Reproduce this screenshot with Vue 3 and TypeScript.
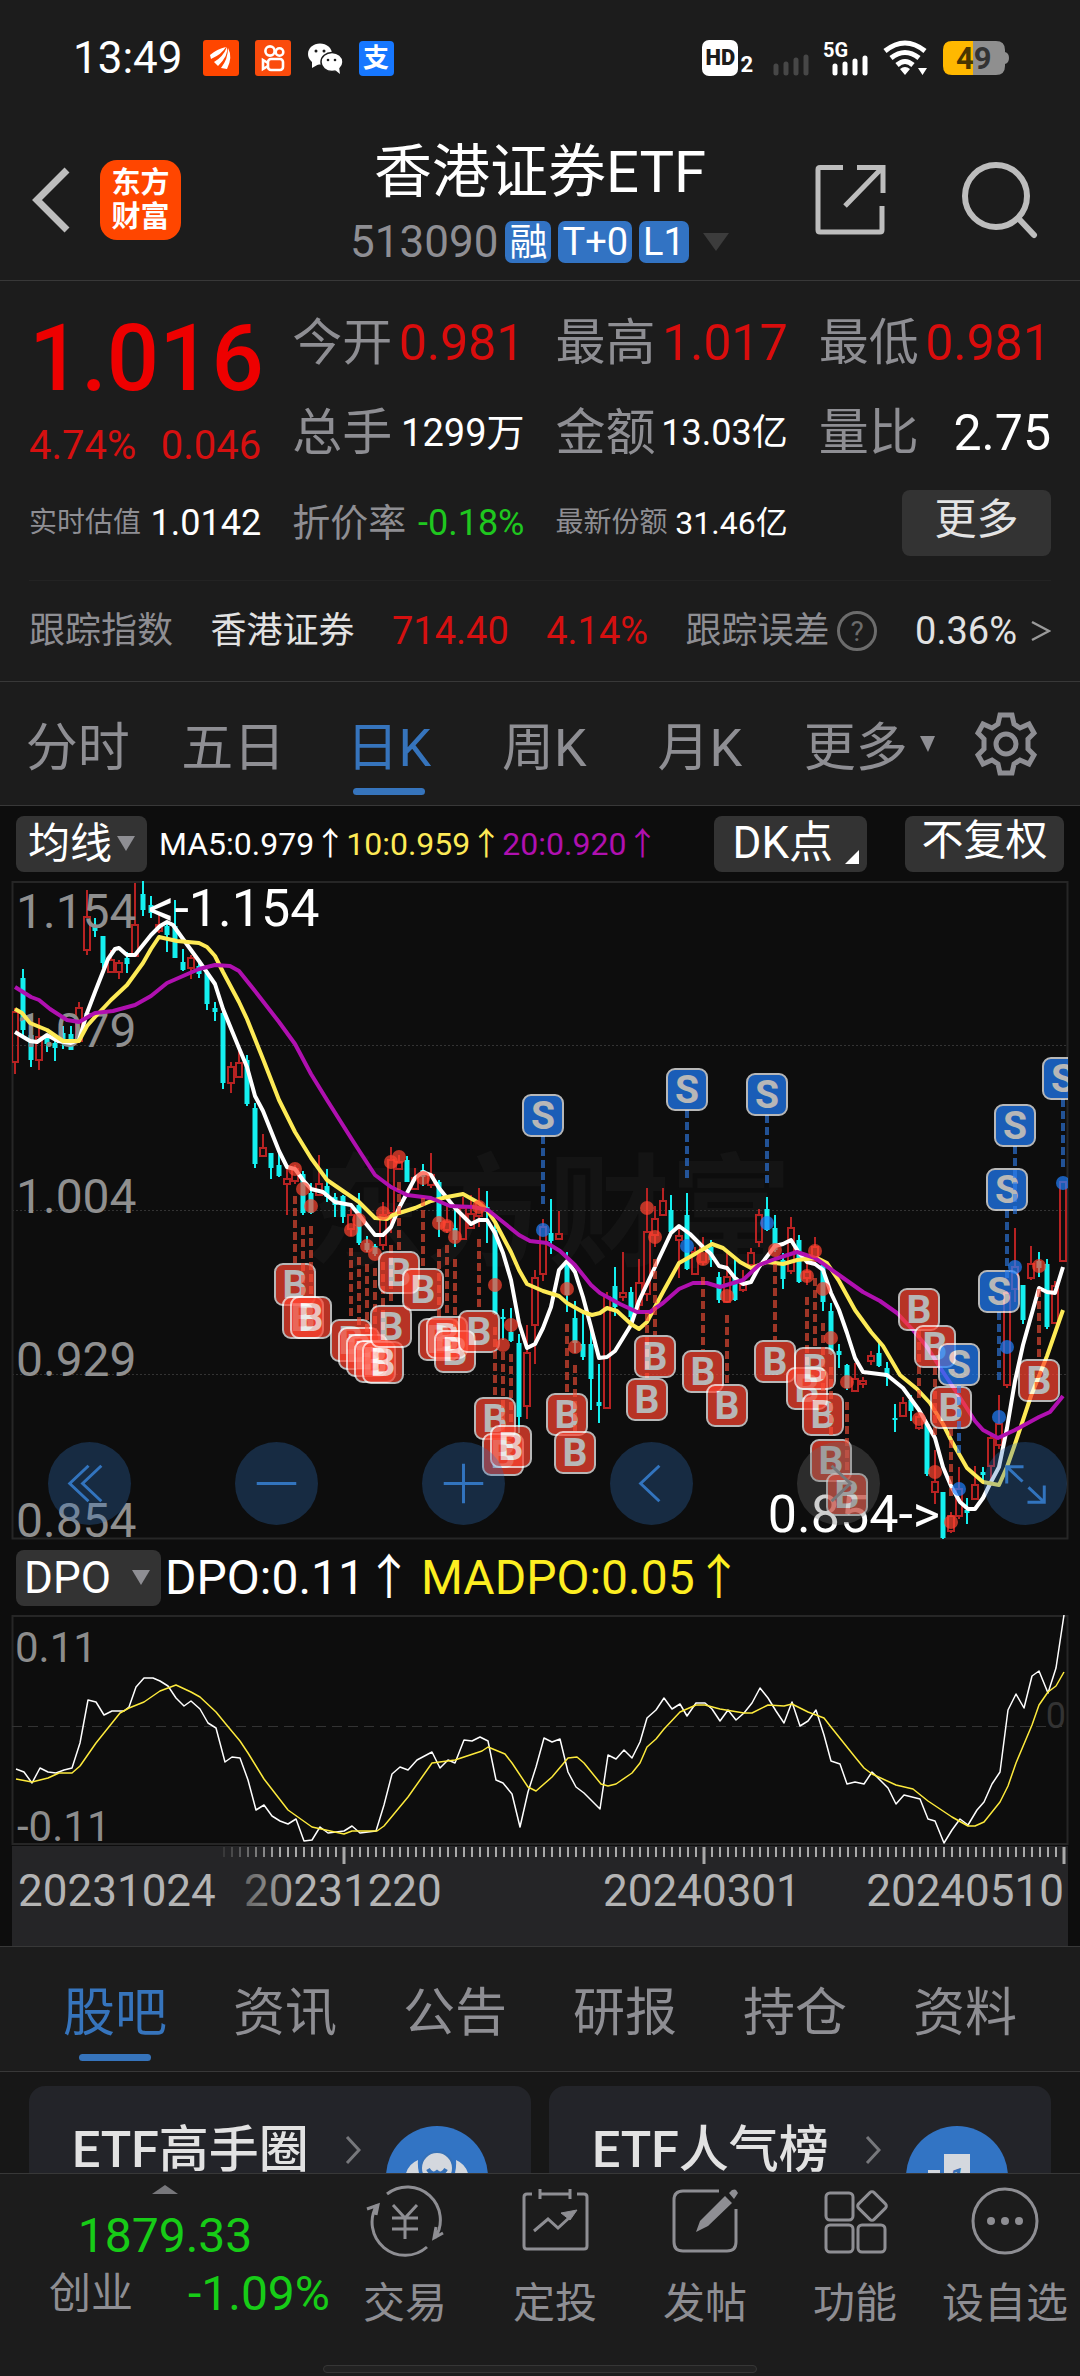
<script setup lang="ts">
import { ref } from 'vue'

// [high, body top, body bottom, low, rising]
type Candle = [number, number, number, number, 0 | 1]
// [candle index, dot y, badge y]
type Signal = [number, number, number]

const candles: Candle[] = [
  [1008, 1012, 1062, 1074, 1], [969, 978, 1030, 1035, 0], [1022, 1035, 1060, 1067, 0], [1018, 1037, 1060, 1070, 1],
  [1035, 1038, 1044, 1052, 0], [1041, 1043, 1048, 1061, 0], [1026, 1033, 1041, 1049, 0], [1026, 1034, 1050, 1050, 0],
  [1002, 1008, 1041, 1043, 1], [890, 917, 950, 955, 1], [918, 927, 931, 937, 0], [936, 936, 963, 968, 0],
  [950, 960, 972, 973, 1], [960, 963, 972, 979, 1], [952, 958, 964, 973, 0], [883, 925, 956, 956, 1],
  [881, 894, 910, 916, 0], [896, 905, 913, 918, 0], [913, 925, 931, 933, 1], [924, 926, 935, 952, 0],
  [900, 926, 958, 958, 0], [949, 962, 970, 971, 0], [955, 958, 968, 979, 1], [961, 966, 974, 978, 0],
  [970, 973, 1004, 1010, 0], [1002, 1008, 1012, 1021, 0], [1011, 1013, 1083, 1089, 0], [1062, 1067, 1083, 1093, 1],
  [1050, 1063, 1077, 1078, 1], [1055, 1060, 1104, 1106, 0], [1103, 1108, 1164, 1168, 0], [1134, 1148, 1156, 1157, 1],
  [1153, 1153, 1168, 1179, 0], [1148, 1165, 1176, 1177, 0], [1169, 1179, 1184, 1215, 1], [1165, 1169, 1181, 1184, 1],
  [1171, 1174, 1213, 1215, 0], [1183, 1193, 1213, 1214, 0], [1155, 1184, 1195, 1196, 1], [1169, 1186, 1197, 1202, 0],
  [1193, 1197, 1205, 1217, 0], [1195, 1196, 1217, 1223, 0], [1208, 1215, 1229, 1236, 1], [1193, 1205, 1243, 1245, 0],
  [1236, 1243, 1250, 1252, 0], [1244, 1246, 1254, 1256, 0], [1202, 1215, 1245, 1250, 1], [1147, 1160, 1213, 1233, 1],
  [1155, 1162, 1169, 1170, 1], [1156, 1160, 1182, 1182, 0], [1168, 1178, 1189, 1190, 1], [1164, 1170, 1177, 1186, 0],
  [1153, 1175, 1185, 1188, 1], [1180, 1182, 1222, 1237, 0], [1205, 1222, 1230, 1233, 1], [1208, 1228, 1240, 1247, 0],
  [1197, 1208, 1239, 1240, 1], [1195, 1214, 1228, 1229, 1], [1188, 1203, 1216, 1227, 1], [1191, 1207, 1212, 1243, 0],
  [1222, 1230, 1314, 1315, 0], [1309, 1317, 1319, 1340, 0], [1308, 1332, 1341, 1342, 0], [1334, 1343, 1417, 1433, 0],
  [1325, 1353, 1406, 1419, 1], [1270, 1278, 1325, 1364, 1], [1219, 1227, 1274, 1281, 1], [1199, 1233, 1241, 1254, 0],
  [1211, 1234, 1239, 1240, 1], [1252, 1262, 1295, 1312, 0], [1301, 1318, 1343, 1353, 0], [1312, 1344, 1357, 1360, 0],
  [1325, 1344, 1379, 1410, 0], [1364, 1402, 1406, 1423, 0], [1292, 1297, 1408, 1409, 1], [1267, 1286, 1307, 1316, 0],
  [1252, 1293, 1297, 1301, 1], [1287, 1292, 1317, 1327, 0], [1259, 1283, 1305, 1313, 1], [1188, 1232, 1294, 1301, 1],
  [1206, 1219, 1235, 1247, 1], [1188, 1201, 1215, 1216, 1], [1195, 1210, 1232, 1233, 0], [1227, 1236, 1240, 1278, 1],
  [1193, 1215, 1269, 1270, 0], [1247, 1252, 1274, 1275, 1], [1237, 1247, 1262, 1265, 1], [1240, 1247, 1260, 1267, 0],
  [1272, 1277, 1300, 1303, 0], [1252, 1277, 1302, 1303, 1], [1258, 1277, 1300, 1301, 0], [1270, 1285, 1290, 1292, 1],
  [1248, 1253, 1265, 1269, 1], [1209, 1215, 1242, 1247, 1], [1197, 1209, 1230, 1231, 0], [1215, 1228, 1250, 1252, 0],
  [1253, 1260, 1279, 1289, 0], [1217, 1228, 1271, 1274, 1], [1235, 1240, 1282, 1283, 0], [1260, 1272, 1278, 1285, 1],
  [1237, 1247, 1261, 1266, 1], [1261, 1265, 1302, 1311, 0], [1303, 1311, 1354, 1355, 0], [1344, 1351, 1355, 1368, 0],
  [1364, 1365, 1388, 1390, 0], [1363, 1379, 1391, 1392, 1], [1377, 1381, 1384, 1388, 1], [1351, 1356, 1361, 1365, 1],
  [1342, 1353, 1366, 1367, 0], [1362, 1368, 1377, 1386, 0], [1404, 1418, 1420, 1432, 0], [1397, 1403, 1416, 1417, 1],
  [1395, 1400, 1411, 1421, 0], [1414, 1417, 1428, 1430, 1], [1421, 1424, 1474, 1476, 0], [1450, 1482, 1492, 1504, 1],
  [1492, 1492, 1538, 1539, 0], [1512, 1516, 1531, 1533, 1], [1467, 1489, 1516, 1519, 1], [1498, 1510, 1513, 1524, 0],
  [1466, 1485, 1499, 1500, 1], [1467, 1472, 1475, 1480, 0], [1435, 1438, 1466, 1486, 1], [1395, 1424, 1445, 1449, 1],
  [1291, 1293, 1385, 1388, 1], [1228, 1267, 1289, 1302, 1], [1285, 1285, 1320, 1324, 0], [1246, 1264, 1278, 1280, 1],
  [1252, 1261, 1268, 1277, 0], [1259, 1264, 1327, 1329, 0], [1281, 1286, 1323, 1324, 1], [1182, 1182, 1261, 1261, 1],
]

const buys: Signal[] = [
  [35, 1169, 1284], [36, 1189, 1317], [37, 1206, 1317], [42, 1230, 1340], [43, 1220, 1348], [44, 1246, 1355],
  [45, 1254, 1361], [46, 1213, 1362], [47, 1162, 1326], [48, 1157, 1272], [51, 1178, 1289], [53, 1223, 1339],
  [54, 1226, 1337], [55, 1237, 1351], [58, 1207, 1331], [60, 1285, 1418], [61, 1345, 1454], [62, 1325, 1446],
  [69, 1289, 1414], [70, 1347, 1452], [79, 1208, 1399], [80, 1237, 1356], [86, 1259, 1371], [89, 1296, 1405],
  [95, 1250, 1361], [99, 1276, 1388], [100, 1251, 1368], [101, 1289, 1414], [102, 1338, 1460], [104, 1382, 1494],
  [113, 1419, 1309], [115, 1472, 1346], [117, 1522, 1407], [128, 1266, 1380],
]
const sells: Signal[] = [
  [66, 1230, 1115], [84, 1246, 1089], [94, 1223, 1094], [118, 1489, 1364],
  [123, 1417, 1291], [124, 1347, 1189], [125, 1267, 1125], [131, 1183, 1078],
]

const cx = (i: number): number => 15 + i * 8

const signals = [
  ...buys.map((s) => ({ s, kind: 'B' })),
  ...sells.map((s) => ({ s, kind: 'S' })),
].map(({ s: [i, dot, y], kind }) => {
  const below = y > dot
  return {
    kind,
    x: cx(i),
    dot,
    y,
    from: below ? candles[i][3] + 12 : y + 21,
    to: below ? y - 21 : candles[i][0] - 13,
  }
})

const ma5 =
  '15,1032 30,1041 37,1042 47,1035 58,1041 71,1043 79,1040 87,1013 95,992 108,959 115,949 119,948 127,955 135,955 143,945 151,935 160,926 167,922 173,925 183,939 199,961 215,984 223,1009 239,1048 247,1067 255,1096 263,1111 279,1151 287,1167 295,1169 303,1180 311,1189 323,1192 335,1202 351,1205 360,1216 367,1225 375,1235 383,1235 391,1227 399,1208 415,1178 423,1172 431,1175 439,1188 455,1208 471,1224 479,1220 487,1220 495,1233 503,1253 511,1280 519,1323 527,1348 535,1344 543,1328 551,1307 559,1270 567,1261 575,1272 583,1297 591,1327 599,1358 607,1357 615,1351 623,1338 631,1325 639,1301 655,1267 671,1233 679,1226 690,1234 703,1247 711,1254 719,1266 727,1268 735,1278 743,1284 751,1282 759,1267 775,1246 783,1244 791,1240 799,1253 807,1262 815,1264 823,1270 831,1293 839,1310 847,1333 855,1358 863,1372 887,1375 903,1388 919,1410 935,1438 943,1467 951,1486 960,1502 968,1509 975,1509 983,1498 991,1482 999,1467 1007,1428 1015,1381 1023,1345 1039,1288 1047,1292 1055,1293 1063,1267'
const ma10 =
  '15,1009 22,1013 30,1023 47,1030 63,1041 79,1041 87,1026 95,1017 111,1000 127,985 143,963 151,949 159,937 177,941 199,943 207,947 215,956 223,972 239,1002 247,1019 263,1059 279,1100 295,1132 311,1158 327,1180 343,1191 359,1202 375,1218 387,1219 393,1215 415,1208 431,1201 447,1197 463,1194 479,1203 487,1210 495,1222 511,1252 519,1270 527,1284 543,1291 559,1296 567,1303 583,1312 592,1315 600,1313 607,1308 617,1311 631,1324 639,1329 647,1322 663,1292 679,1263 695,1254 712,1244 723,1248 740,1262 751,1268 767,1262 783,1264 797,1260 817,1258 827,1263 839,1281 855,1310 871,1332 883,1346 900,1375 917,1389 930,1403 943,1424 951,1440 967,1468 983,1482 999,1485 1007,1467 1015,1444 1031,1396 1047,1356 1063,1310'
const ma20 =
  '15,987 31,997 39,1000 50,1009 67,1020 79,1022 95,1013 113,1011 135,1005 151,996 167,983 183,976 199,969 215,965 230,966 239,971 255,991 279,1022 295,1044 311,1074 327,1100 351,1138 360,1152 375,1175 391,1187 407,1195 431,1198 450,1206 473,1207 488,1210 503,1222 519,1235 530,1241 547,1243 560,1251 575,1265 591,1285 600,1293 620,1304 637,1312 650,1312 663,1303 679,1289 693,1283 707,1283 720,1287 743,1280 759,1265 775,1259 797,1252 815,1258 839,1275 863,1292 880,1301 897,1313 913,1330 927,1347 943,1372 959,1396 975,1421 983,1430 998,1438 1015,1430 1039,1417 1050,1412 1063,1396'
const dpo =
  '16,1769 24,1772 32,1783 40,1768 48,1772 56,1773 64,1770 72,1768 80,1743 88,1700 96,1702 104,1715 112,1711 124,1711 129,1707 136,1687 144,1678 153,1678 160,1681 168,1686 176,1698 184,1706 191,1701 200,1709 208,1723 216,1728 225,1762 232,1757 240,1758 248,1780 256,1810 264,1805 272,1816 280,1821 288,1824 296,1819 304,1841 312,1840 320,1827 328,1833 344,1831 352,1826 360,1833 376,1831 384,1805 392,1774 400,1767 408,1770 417,1760 432,1752 440,1768 448,1760 455,1763 464,1740 472,1741 480,1737 488,1741 496,1780 503,1783 512,1794 520,1827 528,1792 536,1767 544,1738 552,1742 560,1739 568,1772 576,1787 584,1793 600,1809 608,1755 616,1759 624,1750 632,1758 640,1742 647,1718 656,1710 664,1698 672,1709 680,1704 687,1716 696,1703 705,1703 712,1709 720,1721 728,1710 736,1720 744,1713 752,1703 760,1688 768,1698 776,1711 784,1723 792,1702 800,1726 808,1721 816,1710 824,1735 831,1761 840,1764 847,1784 855,1782 864,1784 872,1772 888,1788 896,1804 904,1795 920,1799 928,1819 935,1821 944,1843 952,1830 960,1819 968,1825 977,1810 984,1802 992,1784 1000,1772 1008,1710 1016,1694 1024,1708 1032,1676 1039,1671 1048,1693 1056,1668 1064,1615'
const madpo =
  '16,1779 32,1782 48,1778 59,1773 72,1773 80,1766 96,1743 120,1713 129,1708 144,1702 160,1691 176,1685 191,1692 200,1697 216,1712 225,1723 240,1741 248,1753 264,1779 288,1810 312,1827 344,1834 352,1831 377,1831 384,1826 408,1797 432,1763 455,1760 482,1751 488,1747 505,1754 512,1763 528,1787 536,1791 552,1777 568,1758 577,1757 584,1763 601,1784 608,1786 616,1784 632,1773 640,1763 647,1747 656,1739 664,1729 680,1712 696,1705 705,1705 720,1709 744,1713 752,1713 768,1705 784,1706 792,1704 808,1712 816,1715 824,1718 831,1727 855,1757 864,1768 872,1774 896,1785 913,1789 928,1801 952,1817 968,1826 975,1826 984,1822 1000,1802 1008,1786 1016,1763 1032,1725 1039,1705 1048,1692 1056,1686 1064,1672'

const ticks = Array.from({ length: 106 }, (_, k) => {
  const x = 224 + k * 8
  return { x, major: (x - 344) % 360 === 0, opacity: Math.min(1, 0.15 + k * 0.12) }
})

const periods = ['分时', '五日', '日K', '周K', '月K']
const period = ref('日K')
const sections = ['股吧', '资讯', '公告', '研报', '持仓', '资料']
const section = ref('股吧')
</script>

<template>
  <div class="app">
    <div class="status">
      <div class="status-side">
        <span class="time">13:49</span>
        <svg class="s-icon" viewBox="0 0 36 36"><rect width="36" height="36" rx="3" fill="#ff4600" /><path d="M7 15q7-6 16-8q-4 7-15 12zM11 22q9-5 13-15q2 8-9 19zM18 28q7-9 7-20q5 9-1 21z" fill="#fff" /></svg>
        <svg class="s-icon" viewBox="0 0 36 36"><rect width="36" height="36" rx="3" fill="#fa4b0c" /><g fill="none" stroke="#fff" stroke-width="2.6"><circle cx="15" cy="11" r="4.6" /><circle cx="24.500" cy="12" r="3.800" /><rect x="13" y="19" width="15" height="11" rx="3" /><path d="M13 23L8 20v9l5-3" /></g></svg>
        <svg class="s-icon" viewBox="0 0 36 36"><ellipse cx="13" cy="14" rx="12" ry="10.500" fill="#fff" /><path d="M5 20l0 8 7-4z" fill="#fff" /><ellipse cx="25" cy="22" rx="11" ry="9.500" fill="#fff" stroke="#1c1c1c" stroke-width="1.500" /><path d="M28 30l5 4-1-7z" fill="#fff" /><g fill="#1c1c1c"><circle cx="9" cy="11" r="1.500" /><circle cx="17" cy="11" r="1.500" /><circle cx="21" cy="20" r="1.300" /><circle cx="28" cy="20" r="1.300" /></g></svg>
        <span class="alipay">支</span>
      </div>
      <div class="status-side right">
        <span class="hd"><b>HD</b><i>2</i></span>
        <svg class="bars dim" viewBox="0 0 36 36"><path d="M3 26v7M13 24v9M23 20v13M33 17v16" stroke="#474747" stroke-width="5" stroke-linecap="round" /></svg>
        <svg class="net" viewBox="0 0 46 36"><text x="0" y="17" font-size="20" font-weight="700" fill="#fff">5G</text><path d="M12 26v7M22 24v9M32 21v12M42 18v15" stroke="#fff" stroke-width="5" stroke-linecap="round" /></svg>
        <svg class="wifi" viewBox="0 0 46 36"><g fill="none" stroke="#fff" stroke-width="5"><path d="M2 11Q22-5 42 11" /><path d="M8 18Q22 7 36 18" /><path d="M14 25Q22 18 30 25" /></g><path d="M17 29q5-4 10 0l-5 6zM35 28h9l-4.500 7z" fill="#fff" /></svg>
        <svg class="battery" viewBox="0 0 66 34"><path d="M30 0h23q9 0 9 9v2q4 1 4 6t-4 6v2q0 9-9 9H30z" fill="#8f8f8f" /><path d="M30 0H9Q0 0 0 9v16q0 9 9 9h21z" fill="#ffb800" /><text x="13" y="28" font-size="31" font-weight="700" fill="#4a3600">4<tspan fill="#333">9</tspan></text></svg>
      </div>
    </div>

    <header class="header">
      <div class="head-left">
        <button class="icon-btn" aria-label="返回"><svg width="38" height="66" viewBox="0 0 38 66"><path d="M35 3L5 33l30 30" fill="none" stroke="#bdbdbd" stroke-width="7" /></svg></button>
        <a class="brand" href="#">东方<br />财富</a>
      </div>
      <div class="head-title">
        <h1>香港证券ETF</h1>
        <div class="code">
          <span>513090</span><b>融</b><b>T+0</b><b>L1</b>
          <svg width="28" height="18" viewBox="0 0 28 18"><path d="M1 0h26L14 18z" fill="#3c3c3c" /></svg>
        </div>
      </div>
      <div class="head-right">
        <button class="icon-btn" aria-label="分享"><svg width="72" height="72" viewBox="0 0 72 72" fill="none" stroke="#bdbdbd" stroke-width="5"><path d="M29 3.500H6q-2 0-2 2V66q0 2 2 2h60q2 0 2-2V42" /><path d="M43 3.500h26V29M68 4L31 42" /></svg></button>
        <button class="icon-btn" aria-label="搜索"><svg width="76" height="80" viewBox="0 0 76 80" fill="none" stroke="#bdbdbd"><circle cx="34" cy="36" r="31" stroke-width="6" /><path d="M57 59l15 16" stroke-width="6" stroke-linecap="round" /></svg></button>
      </div>
    </header>

    <section class="quote">
      <div class="grid">
        <div class="price">
          <strong>1.016</strong>
          <div><span>4.74%</span><span>0.046</span></div>
        </div>
        <div class="cell"><span class="k">今开</span><span class="v red">0.981</span></div>
        <div class="cell"><span class="k">最高</span><span class="v red">1.017</span></div>
        <div class="cell"><span class="k">最低</span><span class="v red">0.981</span></div>
        <div class="cell"><span class="k">总手</span><span class="v mid">1299万</span></div>
        <div class="cell"><span class="k">金额</span><span class="v small">13.03亿</span></div>
        <div class="cell"><span class="k">量比</span><span class="v">2.75</span></div>
        <div class="cell"><span class="k tiny">实时估值</span><span class="v small">1.0142</span></div>
        <div class="cell"><span class="k mid">折价率</span><span class="v small green">-0.18%</span></div>
        <div class="cell"><span class="k tiny">最新份额</span><span class="v mini">31.46亿</span></div>
        <div class="cell end"><button class="more">更多</button></div>
      </div>
      <div class="track">
        <span class="grey">跟踪指数</span>
        <span>香港证券</span>
        <span class="num red">714.40</span>
        <span class="num red">4.14%</span>
        <span class="grey help">跟踪误差<svg width="42" height="42" viewBox="0 0 42 42"><circle cx="21" cy="21" r="18.500" fill="none" stroke="#6c6c6c" stroke-width="3" /><text x="21" y="31" text-anchor="middle" font-size="28" fill="#6c6c6c">?</text></svg></span>
        <a class="num" href="#">0.36%<svg width="20" height="22" viewBox="0 0 20 22"><path d="M1 2l17 9-17 9" fill="none" stroke="#9a9a9a" stroke-width="2.500" /></svg></a>
      </div>
    </section>

    <nav class="periods">
      <button v-for="p in periods" :key="p" class="tab" :class="{ on: p === period }" @click="period = p">{{ p }}</button>
      <button class="tab wide">更多<svg width="15" height="16" viewBox="0 0 15 16"><path d="M0 0h15L8 16z" fill="#8e8e93" /></svg></button>
      <button class="icon-btn gear" aria-label="设置"><svg width="62" height="64" viewBox="-31 -32 62 64" fill="none" stroke="#8e8e93" stroke-width="5"><path d="M-6-29H6L8-20L14-16L23-20L28-11L22-5V5L28 11L23 20L14 16L8 20L6 29H-6L-8 20L-14 16L-23 20L-28 11L-22 5V-5L-28-11L-23-20L-14-16L-8-20Z" /><circle r="10" /></svg></button>
    </nav>

    <div class="board">
      <div class="toolbar">
        <label class="pick ma"><select aria-label="主图指标"><option>均线</option></select><svg width="18" height="15" viewBox="0 0 18 15"><path d="M0 0h18L9 15z" fill="#8e8e93" /></svg></label>
        <div class="legend"><span>MA5:0.979↑</span><span class="y">10:0.959↑</span><span class="m">20:0.920↑</span></div>
        <button class="chip dk">DK点<svg width="14" height="14" viewBox="0 0 14 14"><path d="M14 0v14H0z" fill="#fff" /></svg></button>
        <button class="chip fq">不复权</button>
      </div>

      <div class="kline">
        <svg viewBox="0 881 1080 659">
          <defs><clipPath id="plot"><rect x="12" y="881" width="1056" height="659" /></clipPath></defs>
          <text class="mark" x="304" y="1256">东方财富</text>
          <path d="M12 1045.500H1067M12 1210.500H1067M12 1374.500H1067" stroke="#333" stroke-width="1" stroke-dasharray="2 2" />
          <rect x="12.500" y="882" width="1055" height="656.500" fill="none" stroke="#262626" stroke-width="2" />
          <g clip-path="url(#plot)">
            <g v-for="(c, i) in candles" :key="i">
              <template v-if="c[4]">
                <path :d="`M${cx(i)} ${c[0]}V${c[1]}M${cx(i)} ${c[2]}V${c[3]}`" stroke="#b72222" stroke-width="2" />
                <rect :x="cx(i) - 3" :y="c[1]" width="6" :height="Math.max(2, c[2] - c[1])" fill="none" stroke="#b72222" stroke-width="2" />
              </template>
              <template v-else>
                <path :d="`M${cx(i)} ${c[0]}V${c[3]}`" stroke="#14efef" stroke-width="2" />
                <rect :x="cx(i) - 2.5" :y="c[1]" width="5" :height="c[2] - c[1]" fill="#14efef" />
              </template>
            </g>
            <g class="axis">
              <text x="16" y="928">1.154</text><text x="16" y="1047">1.079</text><text x="16" y="1213">1.004</text>
              <text x="16" y="1376">0.929</text><text x="16" y="1537">0.854</text>
            </g>
            <g fill="none" stroke-width="4" stroke-linejoin="round">
              <polyline :points="ma5" stroke="#fff" />
              <polyline :points="ma10" stroke="#fdea56" />
              <polyline :points="ma20" stroke="#b010b0" />
            </g>
            <text class="peak" x="148" y="926">&lt;-1.154</text>
            <text class="peak" x="940" y="1532" text-anchor="end">0.854-&gt;</text>
            <g v-for="(s, i) in signals" :key="i" :class="s.kind === 'B' ? 'buy' : 'sell'">
              <path :d="`M${s.x} ${s.from}V${s.to}`" stroke-width="4" stroke-dasharray="8 4" class="stem" />
              <circle :cx="s.x" :cy="s.dot" r="7" />
              <g class="badge">
                <rect :x="s.x - 20" :y="s.y - 20" width="40" height="41" rx="8" />
                <text :x="s.x" :y="s.y + 14" text-anchor="middle">{{ s.kind }}</text>
              </g>
            </g>
          </g>
        </svg>
        <div class="rounds">
          <button aria-label="最早"><svg viewBox="0 0 84 84"><path d="M41 24L22 42l19 18M54 24L35 42l19 18" /></svg></button>
          <button aria-label="缩小"><svg viewBox="0 0 84 84"><path d="M22 42h40" /></svg></button>
          <button aria-label="放大"><svg viewBox="0 0 84 84"><path d="M22 42h40M42 22v40" /></svg></button>
          <button aria-label="左移"><svg viewBox="0 0 84 84"><path d="M50 24L31 42l19 18" /></svg></button>
          <button class="off" aria-label="右移"><svg viewBox="0 0 84 84"><path d="M35 24l19 18-19 18" /></svg></button>
          <button aria-label="全屏"><svg viewBox="0 0 84 84"><path d="M40 25H23v17M24 26l15 14M61 44v17H44M60 60L45 46" /></svg></button>
        </div>
      </div>

      <div class="toolbar">
        <label class="pick dpo"><select aria-label="副图指标"><option>DPO</option></select><svg width="18" height="15" viewBox="0 0 18 15"><path d="M0 0h18L9 15z" fill="#8e8e93" /></svg></label>
        <div class="legend big"><span>DPO:0.11↑</span><span class="yy">MADPO:0.05↑</span></div>
      </div>

      <svg class="sub" viewBox="0 1615 1080 331">
        <defs><linearGradient id="fade" gradientUnits="userSpaceOnUse" x1="244" y1="0" x2="300" y2="0"><stop offset="0" stop-color="#666" /><stop offset="1" stop-color="#b4b4b4" /></linearGradient></defs>
        <rect x="12" y="1846" width="1056" height="100" fill="#252527" />
        <rect x="12.500" y="1616" width="1055" height="228" fill="none" stroke="#262626" stroke-width="2" />
        <path d="M12 1726.500H1067" stroke="#333" stroke-dasharray="10 6" />
        <text x="1066" y="1728" text-anchor="end" font-size="36" fill="#333">0</text>
        <g font-size="42" fill="#8c8c8c"><text x="15" y="1662">0.11</text><text x="17" y="1841">-0.11</text></g>
        <g fill="none" stroke-linejoin="round"><polyline :points="dpo" stroke="#fff" stroke-width="1.500" /><polyline :points="madpo" stroke="#fdea3c" stroke-width="1.500" /></g>
        <path v-for="t in ticks" :key="t.x" :d="`M${t.x} 1847v${t.major ? 17 : 10}`" stroke="#aaa" :stroke-width="t.major ? 3 : 2" :opacity="t.opacity" />
        <g font-size="44" fill="#b4b4b4"><text x="18" y="1906">20231024</text><text x="244" y="1906" fill="url(#fade)">20231220</text><text x="603" y="1906">20240301</text><text x="1064" y="1906" text-anchor="end">20240510</text></g>
      </svg>
    </div>

    <nav class="sections">
      <button v-for="s in sections" :key="s" class="tab" :class="{ on: s === section }" @click="section = s">{{ s }}</button>
    </nav>

    <main class="cards">
      <a class="card" href="#"><span>ETF高手圈</span><svg width="16" height="30" viewBox="0 0 16 30"><path d="M2 2l12 13L2 28" fill="none" stroke="#77787c" stroke-width="3" /></svg>
        <svg class="disc" width="102" height="102" viewBox="0 0 102 102"><circle cx="51" cy="51" r="51" fill="#3274c4" /><path d="M32 34q-14 6-13 24h18q-6-12-5-24zM70 34q14 6 13 24H65q6-12 5-24z" fill="#d4d8de" /><circle cx="51" cy="42" r="16" fill="#d4d8de" stroke="#3571b8" stroke-width="2" /><path d="M42 43q4 7 9 3q5 4 9-3" fill="none" stroke="#3571b8" stroke-width="4" /></svg></a>
      <a class="card" href="#"><span>ETF人气榜</span><svg width="16" height="30" viewBox="0 0 16 30"><path d="M2 2l12 13L2 28" fill="none" stroke="#77787c" stroke-width="3" /></svg>
        <svg class="disc" width="102" height="102" viewBox="0 0 102 102"><circle cx="51" cy="51" r="51" fill="#3274c4" /><path d="M38 28h26v60H38zM22 44h12v44H22z" fill="#d4d8de" /><text x="44" y="59" font-size="24" font-weight="700" font-style="italic" fill="#3571b8">1</text></svg></a>
    </main>

    <footer class="bar">
      <div class="bar-row">
        <a class="index" href="#">
          <svg width="26" height="9" viewBox="0 0 26 9"><path d="M13 0l13 9H0z" fill="#77777b" /></svg>
          <strong>1879.33</strong>
          <div><span>创业</span><em>-1.09%</em></div>
        </a>
        <button class="act"><svg viewBox="0 0 80 72"><path d="M22 9A33 33 0 0 1 70 53M62 62A33 33 0 0 1 12 20M2 24l11-4-2 10M78 48l-9 5 2-11M28 20l12 13L52 20M27 33h26M27 44h26M40 33v21" /></svg>交易</button>
        <button class="act"><svg viewBox="0 0 80 72"><path d="M17 9h-5q-3 0-3 3v49q0 3 3 3h57q3 0 3-3V12q0-3-3-3h-7M25 4v10M55 4v10M25 9h30" /><path d="M19 46l14-12 10 9 12-11" /><path d="M46 28l16-3-7 10z" fill="#8e8e93" stroke-width="1" /></svg>定投</button>
        <button class="act"><svg viewBox="0 0 80 72"><path d="M54 6H18q-9 0-9 9v42q0 9 9 9h44q9 0 9-9V24" /><path d="M31 47l4-11L60 11l7 7L43 41zM64 8l3-3q3-1 4 0l2 3-4 6z" fill="#8e8e93" stroke="none" /></svg>发帖</button>
        <button class="act"><svg viewBox="0 0 80 72"><rect x="11" y="8" width="27" height="27" rx="4" /><rect x="11" y="40" width="27" height="27" rx="4" /><rect x="43" y="40" width="27" height="27" rx="4" /><rect x="46" y="10" width="22" height="22" rx="3" transform="rotate(45 57 21)" /></svg>功能</button>
        <button class="act"><svg viewBox="0 0 80 72"><circle cx="40" cy="36" r="32" /><g fill="#8e8e93" stroke="none"><circle cx="26" cy="36" r="4" /><circle cx="40" cy="36" r="4" /><circle cx="54" cy="36" r="4" /></g></svg>设自选</button>
      </div>
      <div class="home"></div>
    </footer>
  </div>
</template>

<style>
body {
  margin: 0;
  background: #1c1c1c;
}
</style>

<style scoped>
.app {
  height: 100vh;
  display: flex;
  flex-direction: column;
  overflow: hidden;
  background: #1c1c1c;
  color: #fff;
  font-family: Roboto, "Noto Sans CJK SC", sans-serif;
  white-space: nowrap;
}
.app > * {
  flex: none;
}
button,
select {
  box-sizing: border-box;
  font-family: inherit;
  color: inherit;
  background: none;
  border: 0;
  padding: 0;
  margin: 0;
}
a {
  color: inherit;
  text-decoration: none;
}
svg {
  display: block;
  flex: none;
}
.red {
  color: #d90d0d;
}
.green {
  color: #1fc71f;
}

.status {
  height: 116px;
  padding: 0 71px 4px 73px;
  display: flex;
  justify-content: space-between;
  align-items: center;
}
.status svg {
  overflow: visible;
}
.status-side {
  display: flex;
  align-items: center;
  gap: 16px;
}
.status-side.right {
  gap: 14px;
}
.time {
  font-size: 44px;
  margin-right: 4px;
}
.s-icon {
  width: 36px;
  height: 36px;
}
.alipay {
  width: 35px;
  height: 35px;
  border-radius: 4px;
  background: #1677ff;
  font-size: 26px;
  font-weight: 700;
  line-height: 35px;
  text-align: center;
}
.hd {
  display: flex;
  align-items: flex-end;
  margin-right: 6px;
}
.hd b {
  width: 36px;
  height: 36px;
  border-radius: 7px;
  background: #fff;
  color: #1c1c1c;
  font-size: 22px;
  font-weight: 900;
  line-height: 36px;
  text-align: center;
}
.hd i {
  font-style: normal;
  font-weight: 700;
  font-size: 22px;
  line-height: 22px;
  margin-left: 2px;
}
.bars {
  width: 36px;
  height: 36px;
}
.net,
.wifi {
  width: 46px;
  height: 36px;
}
.battery {
  width: 66px;
  height: 34px;
}

.header {
  height: 160px;
  display: grid;
  grid-template-columns: 1fr auto 1fr;
  align-items: center;
  border-bottom: 1px solid #383838;
}
.head-left {
  display: flex;
  align-items: center;
  gap: 30px;
  padding-left: 32px;
}
.brand {
  width: 81px;
  height: 80px;
  box-sizing: border-box;
  padding-top: 6px;
  border-radius: 17px;
  background: #ff4600;
  font-size: 29px;
  line-height: 34px;
  font-weight: 700;
  text-align: center;
}
.head-title {
  display: flex;
  flex-direction: column;
  align-items: center;
  gap: 16px;
  padding-top: 2px;
}
h1 {
  margin: 0;
  font-size: 58px;
  line-height: 66px;
  font-weight: 400;
}
.code {
  display: flex;
  align-items: center;
  gap: 7px;
  font-size: 44px;
  line-height: 42px;
  color: #8e8e93;
}
.code b {
  padding: 0 4px;
  border-radius: 7px;
  background: #3273c3;
  color: #fff;
  font-size: 38px;
  font-weight: 400;
}
.code svg {
  margin-left: 6px;
}
.head-right {
  display: flex;
  justify-content: flex-end;
  align-items: center;
  gap: 76px;
  padding-right: 42px;
}

.quote {
  padding: 17px 29px 0;
  border-bottom: 1px solid #383838;
}
.grid {
  display: grid;
  grid-template-columns: repeat(4, minmax(0, 1fr));
  grid-auto-rows: 90px;
  column-gap: 31px;
}
.price {
  grid-row: span 2;
  padding-top: 16px;
  color: #ee0000;
}
.price strong {
  display: block;
  font-size: 92px;
  line-height: 90px;
  font-weight: 500;
}
.price div {
  display: flex;
  justify-content: space-between;
  margin-top: 22px;
  font-size: 40px;
  line-height: 40px;
  color: #d51010;
}
.cell {
  display: flex;
  align-items: center;
  justify-content: space-between;
  font-size: 50px;
  line-height: 60px;
}
.cell.end {
  justify-content: flex-end;
}
.k {
  color: #8e8e93;
}
.mid {
  font-size: 38px;
}
.small {
  font-size: 36px;
}
.mini {
  font-size: 32px;
}
.tiny {
  font-size: 28px;
}
.more {
  width: 149px;
  height: 66px;
  padding-bottom: 6px;
  border-radius: 8px;
  background: #333;
  font-size: 42px;
  line-height: 60px;
  color: #e4e4e4;
}
.track {
  margin-top: 12px;
  height: 100px;
  border-top: 1px solid #232323;
  display: flex;
  justify-content: space-between;
  align-items: center;
  font-size: 36px;
  line-height: 48px;
  color: #e2e2e2;
}
.track .grey {
  color: #8e8e93;
}
.track .num {
  font-size: 38px;
}
.track .red {
  color: #d51010;
}
.track .help,
.track a {
  display: flex;
  align-items: center;
  gap: 6px;
}
.track a {
  gap: 14px;
}

.tab {
  position: relative;
  height: 100%;
  font-size: 52px;
  color: #8e8e93;
}
.tab.on {
  color: #3674bc;
}
.tab.on::after {
  content: "";
  position: absolute;
  left: 50%;
  bottom: 10px;
  width: 72px;
  height: 7px;
  margin-left: -36px;
  border-radius: 4px;
  background: #3674bc;
}
.periods {
  height: 123px;
  display: flex;
  align-items: center;
  border-bottom: 1px solid #383838;
}
.periods .tab {
  width: 14.4%;
}
.periods .tab.wide {
  width: 17%;
  display: flex;
  align-items: center;
  justify-content: center;
  gap: 12px;
}
.gear {
  flex: 1;
  display: flex;
  padding-left: 14px;
}

.board {
  background: #0d0d0d;
}
.toolbar {
  height: 75px;
  padding: 0 16px;
  display: flex;
  align-items: center;
}
.chip,
.pick {
  height: 56px;
  box-sizing: border-box;
  border-radius: 8px;
  background: #333;
  font-size: 42px;
}
.pick {
  display: flex;
  align-items: center;
  padding: 0 12px;
}
.pick select {
  flex: 1;
  min-width: 0;
  height: 56px;
  appearance: none;
  font-size: inherit;
}
.ma {
  width: 131px;
}
.dpo {
  width: 145px;
  padding: 0 11px 0 8px;
  font-size: 44px;
}
.chip.dk {
  width: 153px;
  margin-left: auto;
  display: flex;
  align-items: flex-end;
  justify-content: flex-end;
  gap: 12px;
  padding: 0 8px 8px 0;
  font-size: 44px;
  line-height: 42px;
}
.fq {
  width: 159px;
  margin-left: 38px;
  padding-bottom: 6px;
  line-height: 50px;
}
.legend {
  display: flex;
  margin-left: 12px;
  font-size: 32px;
  line-height: 40px;
}
.legend.big {
  margin-left: 4px;
  gap: 8px;
  font-size: 48px;
  line-height: 56px;
}
.y {
  color: #fdea56;
}
.yy {
  color: #fdee21;
}
.m {
  color: #b010b0;
}
.kline {
  position: relative;
}
.kline > svg,
.sub {
  width: 100%;
  height: auto;
}
.mark {
  font-size: 122px;
  font-weight: 700;
  fill: #141414;
}
.axis {
  font-size: 48px;
  fill: #8f8f8f;
}
.peak {
  font-size: 52px;
  fill: #fff;
}
.buy,
.buy .stem {
  fill: #ff4430;
  stroke: #ff5038;
}
.sell,
.sell .stem {
  fill: #2080ff;
  stroke: #3080f0;
}
.stem {
  opacity: 0.6;
}
.buy circle,
.sell circle {
  opacity: 0.7;
  stroke: none;
}
.badge {
  opacity: 0.7;
}
.badge rect {
  stroke: #fff;
  stroke-width: 2px;
}
.badge text {
  font-size: 39px;
  font-weight: 700;
  fill: #fff;
  stroke: none;
}
.rounds {
  position: absolute;
  left: 48px;
  right: 13px;
  bottom: 15px;
  display: flex;
  justify-content: space-between;
}
.rounds button {
  width: 83px;
  height: 83px;
  border-radius: 50%;
  background: rgba(47, 112, 190, 0.3);
}
.rounds path {
  fill: none;
  stroke: #3274be;
  stroke-width: 3px;
}
.rounds .off {
  background: rgba(110, 110, 110, 0.33);
}
.rounds .off path {
  stroke: #77777a;
}

.sections {
  height: 124px;
  padding: 0 30px;
  display: flex;
  border-top: 1px solid #383838;
  border-bottom: 1px solid #383838;
}
.sections .tab {
  flex: 1;
  padding-bottom: 2px;
}
.cards {
  flex: 1 1 0 !important;
  min-height: 0;
  overflow: hidden;
  display: flex;
  align-items: flex-start;
  gap: 18px;
  padding: 14px 29px 0;
  background: #171717;
}
.card {
  flex: 1;
  height: 160px;
  box-sizing: border-box;
  display: flex;
  align-items: flex-start;
  padding: 40px 43px 0 43px;
  border-radius: 16px;
  background: #232429;
  color: #e2e2e2;
  font-size: 50px;
  line-height: 48px;
  font-weight: 500;
}
.card > svg {
  margin: 9px 0 0 auto;
}
.card > .disc {
  margin: 0 0 0 25px;
}

.bar {
  border-top: 1px solid #383838;
  background: #1c1c1c;
}
.bar-row {
  display: flex;
  height: 191px;
}
.index {
  flex: 330 0 0;
  display: flex;
  flex-direction: column;
  align-items: center;
  padding-top: 11px;
  color: #17cc17;
}
.index strong {
  margin-top: 14px;
  font-size: 48px;
  line-height: 56px;
  font-weight: 400;
}
.index div {
  align-self: stretch;
  display: flex;
  justify-content: space-between;
  padding: 0 0 0 49px;
  font-size: 42px;
  line-height: 60px;
}
.index span {
  color: #8e8e93;
}
.index em {
  font-style: normal;
  font-size: 48px;
}
.act {
  flex: 150 0 0;
  min-width: 0;
  display: flex;
  flex-direction: column;
  align-items: center;
  gap: 17px;
  padding-top: 11px;
  font-size: 42px;
  line-height: 60px;
  color: #8e8e93;
}
.act svg {
  width: 80px;
  height: 72px;
  fill: none;
  stroke: #8e8e93;
  stroke-width: 3px;
}
.home {
  width: 40%;
  height: 6px;
  margin: 0 auto 3px;
  border: 1px solid #363636;
  border-radius: 5px;
  background: #222;
}
</style>
